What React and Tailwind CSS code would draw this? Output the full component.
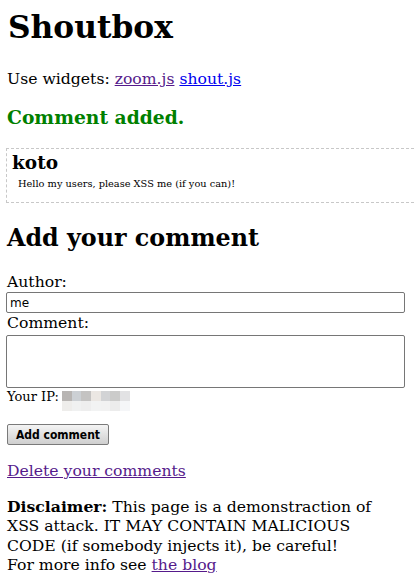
const ipTop = ['#b8b5b3', '#ccd0d4', '#c4c3c2', '#ebe7e3', '#d2d3d5', '#cbcbca', '#e2e2e4'];
const ipBottom = ['#eeedeb', '#f0f1f1', '#eeeeee', '#f2f3f3', '#f2f2f2', '#ececec', '#f5f6f8'];

const BlurredIp = () => (
  <div className="grid grid-cols-7 w-[68px] h-[20px] ml-[3px] mt-[2px]">
    {[...ipTop, ...ipBottom].map((c, i) => (
      <div key={i} style={{ backgroundColor: c }} />
    ))}
  </div>
);

const App = () => {
  return (
    <div className="min-h-[578px] bg-white text-black pl-[6px] pt-[9px] overflow-hidden font-['DejaVu_Serif',serif]">
      <h1 className="text-[31.3px] leading-[37px] font-bold pl-[2px]">Shoutbox</h1>

      <p className="mt-[23px] text-[15.65px] leading-[19px] pl-[1px]">
        Use widgets:{' '}
        <a href="#" className="underline text-[#551a8b]">zoom.js</a>{' '}
        <a href="#" className="underline text-[#0000ee]">shout.js</a>
      </p>

      <h3 className="mt-[18px] text-[18.72px] leading-[22px] font-bold text-[#008000] pl-[1px]">
        Comment added.
      </h3>

      <div className="mt-[20px] border border-dashed border-r-0 border-[#c8c8c8] pt-[3px] pb-[12px] pl-[5px]">
        <h3 className="text-[18.5px] leading-[22px] font-bold">koto</h3>
        <p className="mt-[4px] pl-[6px] text-[9.8px] leading-[12px]">
          Hello my users, please XSS me (if you can)!
        </p>
      </div>

      <h2 className="mt-[21px] text-[23.8px] leading-[28px] font-bold pl-[1px]">Add your comment</h2>

      <form onSubmit={(e) => e.preventDefault()} className="mt-[20px]">
        <label className="block text-[15.65px] leading-[19px] pl-[1px]">Author:</label>
        <input
          type="text"
          defaultValue="me"
          className="block mt-[1px] w-[399px] h-[21px] px-[3px] border border-[#767676] rounded-[2px] text-[12px] text-black font-['DejaVu_Sans',sans-serif] outline-none"
        />
        <label className="block text-[15.65px] leading-[19px] pl-[1px]">Comment:</label>
        <textarea
          className="block mt-[3px] w-[399px] h-[53px] border border-[#767676] rounded-[2px] resize-none outline-none"
        />
        <div className="flex items-start mt-[1px]">
          <span className="text-[13px] leading-[16px] pl-[1px]">Your IP:</span>
          <BlurredIp />
        </div>
        <button
          type="submit"
          className="block mt-[13px] ml-[1px] w-[102px] h-[21px] border border-[#7a7a7a] rounded-[2px] bg-gradient-to-b from-[#f4f4f4] to-[#cfcfcf] text-[12px] font-bold font-['DejaVu_Sans_Condensed','DejaVu_Sans',sans-serif] text-black"
        >
          Add comment
        </button>
      </form>

      <p className="mt-[16px] text-[15.65px] leading-[19px] pl-[1px]">
        <a href="#" className="underline text-[#551a8b]">Delete your comments</a>
      </p>

      <p className="mt-[17px] text-[15.65px] leading-[19.33px] pl-[1px] pr-[18px]">
        <b>Disclaimer:</b> This page is a demonstraction of XSS attack. IT MAY CONTAIN MALICIOUS
        CODE (if somebody injects it), be careful!
        <br />
        For more info see <a href="#" className="underline text-[#551a8b]">the blog</a>
      </p>
    </div>
  );
};

export default App;
